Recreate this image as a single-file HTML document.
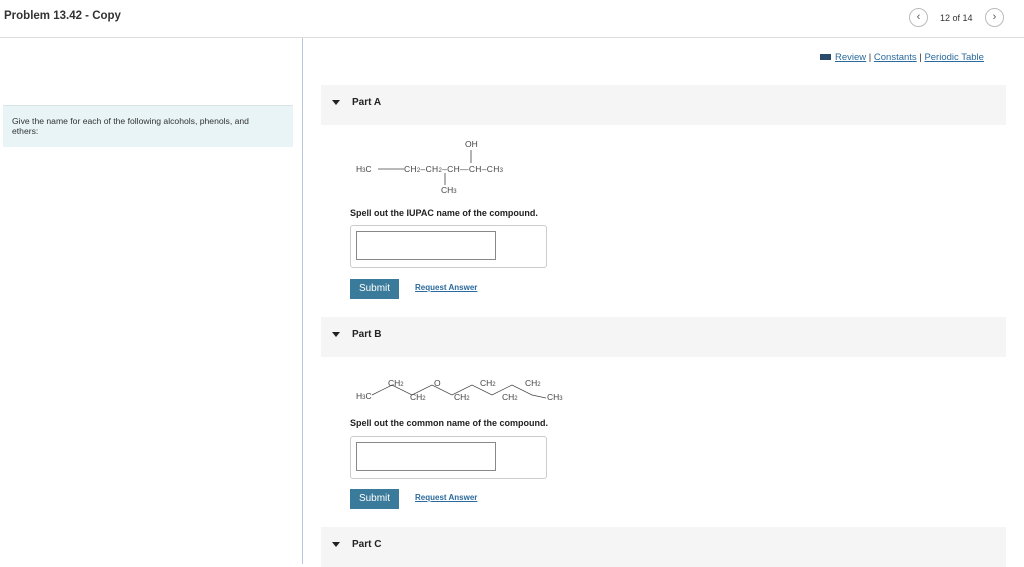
<!DOCTYPE html>
<html><head><style>
*{margin:0;padding:0;box-sizing:border-box}
body{width:1024px;height:564px;overflow:hidden;background:#fff;font-family:"Liberation Sans",Arial,sans-serif;color:#222;position:relative}
.a{position:absolute}
.bar{position:absolute;left:321px;width:685px;height:40px;background:#f5f5f5;font-size:10px;font-weight:bold}
.bar .tri{position:absolute;left:11px;top:15px;width:0;height:0;border-left:4px solid transparent;border-right:4px solid transparent;border-top:5px solid #222}
.bar span{position:absolute;left:31px;top:12px}
.q{font-size:9px;font-weight:bold;color:#222}
.box{position:absolute;left:350px;width:197px;height:43px;border:1px solid #ccc;border-radius:3px}
.inp{position:absolute;left:5px;top:5px;width:140px;height:29px;border:1px solid #888}
.btn{position:absolute;left:350px;width:49px;height:20px;background:#3a7a9a;color:#fff;font-size:10px;text-align:center;line-height:20px}
.lnk{position:absolute;left:415px;font-size:8px;font-weight:bold;color:#2b6a9c;text-decoration:underline}
svg text{font-family:"Liberation Sans",Arial,sans-serif;font-size:8.5px;fill:#444}
</style></head><body>
<div class="a" style="left:4px;top:10px;font-size:11.5px;font-weight:bold;color:#333">Problem 13.42 - Copy</div>
<div class="a" style="left:909px;top:8px;width:19px;height:19px;border:1px solid #bbb;border-radius:50%;font-size:11px;text-align:center;line-height:16px;color:#555">&lsaquo;</div>
<div class="a" style="left:940px;top:13px;font-size:9px;color:#333">12 of 14</div>
<div class="a" style="left:985px;top:8px;width:19px;height:19px;border:1px solid #bbb;border-radius:50%;font-size:11px;text-align:center;line-height:16px;color:#555">&rsaquo;</div>
<div class="a" style="left:0;top:37px;width:1024px;height:1px;background:#ddd"></div>
<div class="a" style="left:302px;top:38px;width:1px;height:526px;background:#b8c8d8"></div>
<div class="a" style="left:820px;top:52px;font-size:9.5px;color:#2b6a9c;white-space:nowrap"><span style="display:inline-block;width:11px;height:6px;background:#2a4a6a;margin-right:4px"></span><u>Review</u> <span style="color:#333">|</span> <u>Constants</u> <span style="color:#333">|</span> <u>Periodic Table</u></div>
<div class="a" style="left:3px;top:105px;width:290px;height:42px;background:#e8f4f5;border-top:1px solid #d8e4e6;font-size:8.6px;color:#333;padding:10px 20px 0 9px;line-height:10px">Give the name for each of the following alcohols, phenols, and ethers:</div>

<div class="bar" style="top:85px"><div class="tri"></div><span>Part A</span></div>
<svg class="a" style="left:340px;top:135px" width="200" height="65">
<text x="125" y="12">OH</text>
<line x1="131" y1="15" x2="131" y2="28" stroke="#444" stroke-width="0.8"/>
<text x="16" y="37">H<tspan font-size="6">3</tspan>C</text>
<line x1="38" y1="34" x2="64" y2="34" stroke="#444" stroke-width="0.8"/>
<text x="64" y="37" textLength="99">CH<tspan font-size="6">2</tspan>–CH<tspan font-size="6">2</tspan>–CH—CH–CH<tspan font-size="6">3</tspan></text>
<line x1="105" y1="38" x2="105" y2="50" stroke="#444" stroke-width="0.8"/>
<text x="101" y="58">CH<tspan font-size="6">3</tspan></text>
</svg>
<div class="a q" style="left:350px;top:208px">Spell out the IUPAC name of the compound.</div>
<div class="box" style="top:225px"><div class="inp"></div></div>
<div class="btn" style="top:279px">Submit</div>
<div class="lnk" style="top:283px">Request Answer</div>

<div class="bar" style="top:317px"><div class="tri"></div><span>Part B</span></div>
<svg class="a" style="left:350px;top:372px" width="230" height="35">
<text x="6" y="27">H<tspan font-size="6">3</tspan>C</text>
<polyline points="22,23 42,13 62,23 82,13 102,23 122,13 142,23 162,13 182,23 196,26" fill="none" stroke="#444" stroke-width="0.7"/>
<text x="38" y="14">CH<tspan font-size="6">2</tspan></text>
<text x="60" y="28">CH<tspan font-size="6">2</tspan></text>
<text x="84" y="14">O</text>
<text x="104" y="28">CH<tspan font-size="6">2</tspan></text>
<text x="130" y="14">CH<tspan font-size="6">2</tspan></text>
<text x="152" y="28">CH<tspan font-size="6">2</tspan></text>
<text x="175" y="14">CH<tspan font-size="6">2</tspan></text>
<text x="197" y="28">CH<tspan font-size="6">3</tspan></text>
</svg>
<div class="a q" style="left:350px;top:418px">Spell out the common name of the compound.</div>
<div class="box" style="top:436px"><div class="inp"></div></div>
<div class="btn" style="top:489px">Submit</div>
<div class="lnk" style="top:493px">Request Answer</div>

<div class="bar" style="top:527px"><div class="tri"></div><span>Part C</span></div>
</body></html>
